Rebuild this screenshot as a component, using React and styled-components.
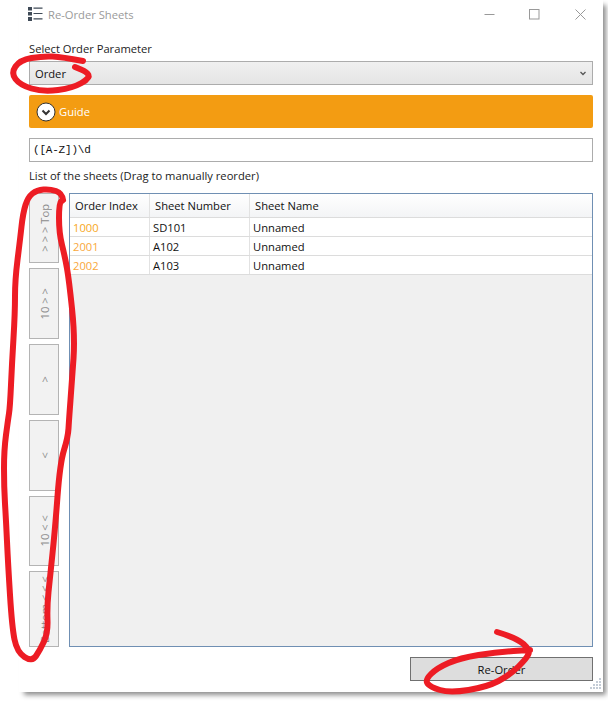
import React from 'react';
import styled, { createGlobalStyle } from 'styled-components';

const Global = createGlobalStyle`
  html, body { margin: 0; padding: 0; background: #fff; }
  body { font-family: "Open Sans", "Noto Sans", sans-serif; }
`;

const Page = styled.div`
  position: relative;
  width: 608px;
  height: 701px;
  overflow: hidden;
  background: #fff;
`;

const Window = styled.div`
  margin-left: 19px;
  width: 584px;
  height: 692px;
  box-sizing: border-box;
  background: #fff;
  box-shadow: 4px 4px 5px -1px rgba(0, 0, 0, 0.45);
  display: flex;
  flex-direction: column;
  position: relative;
`;

const TitleBar = styled.div`
  height: 28px;
  display: flex;
  align-items: center;
  padding-left: 9px;
  flex-shrink: 0;
`;

const Title = styled.span`
  margin-left: 5px;
  font-size: 11.2px;
  color: #9a9a9a;
  flex: 1;
`;

const WinControls = styled.div`
  display: flex;
  align-items: center;
  width: 136.5px;
  flex-shrink: 0;
`;

const WinButton = styled.span`
  width: 45.5px;
  display: flex;
  justify-content: center;
`;

const Body = styled.div`
  flex: 1;
  display: flex;
  flex-direction: column;
  padding: 13px 10px 11px 10px;
  min-height: 0;
`;

const Label = styled.div`
  font-size: 11.2px;
  line-height: 16px;
  color: #1c1c1c;
  height: ${p => p.$h}px;
`;

const Combo = styled.div`
  height: 24px;
  box-sizing: border-box;
  border: 1px solid #acacac;
  background: linear-gradient(#f0f0f0, #e5e5e5);
  display: flex;
  align-items: center;
  justify-content: space-between;
  padding: 0 6px 0 5px;
  font-size: 11.2px;
  color: #111;
`;

const Guide = styled.div`
  height: 33px;
  margin-top: 10px;
  border-radius: 2px;
  background: #f39c12;
  display: flex;
  align-items: center;
  gap: 3px;
  padding-left: 7px;
  color: #fff;
  font-size: 11.2px;
`;

const RegexInput = styled.div`
  height: 24px;
  margin-top: 10px;
  box-sizing: border-box;
  border: 1px solid #acacac;
  background: #fff;
  display: flex;
  align-items: center;
  padding-left: 3px;
  font-family: "Liberation Mono", monospace;
  font-size: 11px;
  letter-spacing: -0.2px;
  color: #111;
`;

const ListLabel = styled(Label)`
  margin-top: 6px;
`;

const ListArea = styled.div`
  flex: 1;
  display: flex;
  gap: 10px;
  min-height: 0;
`;

const SideButtons = styled.div`
  width: 30px;
  display: flex;
  flex-direction: column;
  gap: 5px;
`;

const SideButton = styled.div`
  height: ${p => p.$h}px;
  box-sizing: border-box;
  border: 1px solid #b4b4b4;
  background: #f2f2f2;
  color: #8c8c8c;
  font-size: 11.2px;
  display: flex;
  align-items: center;
  justify-content: center;
  overflow: hidden;
  white-space: nowrap;
`;

const Rotated = styled.span`
  writing-mode: vertical-rl;
  transform: rotate(180deg);
`;

const Grid = styled.div`
  flex: 1;
  box-sizing: border-box;
  border: 1px solid #6f8fb3;
  background: #f0f0f0;
`;

const Row = styled.div`
  display: grid;
  grid-template-columns: 80px 100px 1fr;
  height: ${p => (p.$head ? 24 : 19)}px;
  box-sizing: border-box;
  background: ${p => (p.$head ? 'linear-gradient(#fff, #f3f4f6)' : '#fff')};
  border-bottom: 1px solid #dcdcdc;
`;

const Cell = styled.div`
  display: flex;
  align-items: center;
  padding-left: ${p => (p.$head ? 5 : 3)}px;
  font-size: 11.2px;
  color: ${p => p.$color || '#111'};
  border-right: 1px solid ${p => (p.$last ? 'transparent' : '#e2e2e2')};
  box-sizing: border-box;
  white-space: nowrap;
`;

const Footer = styled.div`
  display: flex;
  justify-content: flex-end;
  margin-top: 10px;
`;

const PrimaryButton = styled.div`
  width: 183px;
  height: 24px;
  box-sizing: border-box;
  border: 1px solid #707070;
  background: #dddddd;
  color: #111;
  font-size: 11.2px;
  display: flex;
  align-items: center;
  justify-content: center;
`;

const Grip = styled.svg`
  position: absolute;
  right: 2px;
  bottom: 3px;
`;

const Scribbles = styled.svg`
  position: absolute;
  left: 0;
  top: 0;
  pointer-events: none;
`;

const rows = [
  ['1000', 'SD101', '#f7a823'],
  ['2001', 'A102', '#f9a83c'],
  ['2002', 'A103', '#f9a83c'],
];

const sideButtons = [
  ['> > > Top', 70],
  ['10 > >', 71],
  ['>', 71],
  ['<', 71],
  ['10 < <', 70],
  ['Bottom < < <', 76],
];

const smooth = pts => {
  let d = `M${pts[0][0]} ${pts[0][1]}`;
  for (let i = 1; i < pts.length - 1; i++) {
    const mx = (pts[i][0] + pts[i + 1][0]) / 2;
    const my = (pts[i][1] + pts[i + 1][1]) / 2;
    d += `Q${pts[i][0]} ${pts[i][1]} ${mx} ${my}`;
  }
  const last = pts[pts.length - 1];
  return `${d}L${last[0]} ${last[1]}`;
};

const orderMark = [[83, 61], [62, 57], [43, 56], [20, 60], [11, 73], [20, 85], [43, 92], [73, 88], [90, 78], [87, 72], [75, 67]];
const listMark = [[63, 200], [62, 193], [50, 189], [37, 190], [28, 197], [23, 213], [20, 240], [15, 280], [15, 313], [12, 363], [10, 407], [8, 420], [4, 450], [4, 487], [6, 520], [8, 563], [12, 627], [17, 652], [32, 662], [40, 650], [48, 633], [47, 607], [50, 577], [55, 530], [60, 463], [68, 437], [69, 420], [72, 380], [75, 337], [69, 280], [65, 257], [59, 233], [59, 203], [63, 200]];
const buttonMark = [[497, 632], [517, 638], [530, 650], [527, 658], [510, 675], [487, 687], [450, 693], [430, 687], [425, 680], [437, 668], [460, 658], [497, 652], [530, 650]];

export default function App() {
  return (
    <Page>
      <Global />
      <Window>
        <TitleBar>
          <svg width="15" height="14" viewBox="0 0 15 14">
            <rect x="0" y="0" width="4" height="3.5" fill="#3f4a57" />
            <rect x="0" y="5" width="4" height="3.5" fill="#3f4a57" />
            <rect x="0" y="10" width="4" height="4" fill="#3f4a57" />
            <path d="M5.5 1.2H14.500M5.500 6.500H14.500M5.500 11.800H14.500" stroke="#3f4a57" strokeWidth="1.2" fill="none" />
          </svg>
          <Title>Re-Order Sheets</Title>
          <WinControls>
            <WinButton>
              <svg width="11" height="11" viewBox="0 0 11 11"><path d="M0.5 5.500H10.500" stroke="#999" fill="none" /></svg>
            </WinButton>
            <WinButton>
              <svg width="11" height="11" viewBox="0 0 11 11"><rect x="0.5" y="0.500" width="9.500" height="9.500" stroke="#999" fill="none" /></svg>
            </WinButton>
            <WinButton>
              <svg width="11" height="11" viewBox="0 0 11 11"><path d="M0.5 0.500L10.500 10.500M10.500 0.500L0.500 10.500" stroke="#999" fill="none" /></svg>
            </WinButton>
          </WinControls>
        </TitleBar>
        <Body>
          <Label $h={20}>Select Order Parameter</Label>
          <Combo>
            <span>Order</span>
            <svg width="6" height="5" viewBox="0 0 6 5"><path d="M0.500 1L3 3.500L5.500 1" stroke="#555" strokeWidth="1.300" fill="none" /></svg>
          </Combo>
          <Guide>
            <svg width="20" height="20" viewBox="0 0 20 20">
              <circle cx="10" cy="10" r="9" fill="#fff" stroke="#333" strokeWidth="1" />
              <path d="M6.500 8.500L10 12L13.500 8.500" stroke="#333" strokeWidth="2" fill="none" />
            </svg>
            <span>Guide</span>
          </Guide>
          <RegexInput>([A-Z])\d</RegexInput>
          <ListLabel $h={25}>List of the sheets (Drag to manually reorder)</ListLabel>
          <ListArea>
            <SideButtons>
              {sideButtons.map(([text, h]) => (
                <SideButton key={text} $h={h}>
                  <Rotated>{text}</Rotated>
                </SideButton>
              ))}
            </SideButtons>
            <Grid>
              <Row $head>
                <Cell $head>Order Index</Cell>
                <Cell $head>Sheet Number</Cell>
                <Cell $head $last>Sheet Name</Cell>
              </Row>
              {rows.map(([idx, num, color]) => (
                <Row key={idx}>
                  <Cell $color={color}>{idx}</Cell>
                  <Cell>{num}</Cell>
                  <Cell $last>Unnamed</Cell>
                </Row>
              ))}
            </Grid>
          </ListArea>
          <Footer>
            <PrimaryButton>Re-Order</PrimaryButton>
          </Footer>
        </Body>
        <Grip width="11" height="11" viewBox="0 0 11 11" fill="#c4ccd6">
          <rect x="9" y="0" width="2" height="2" />
          <rect x="9" y="3" width="2" height="2" /><rect x="6" y="3" width="2" height="2" />
          <rect x="9" y="6" width="2" height="2" /><rect x="6" y="6" width="2" height="2" /><rect x="3" y="6" width="2" height="2" />
          <rect x="9" y="9" width="2" height="2" /><rect x="6" y="9" width="2" height="2" /><rect x="3" y="9" width="2" height="2" /><rect x="0" y="9" width="2" height="2" />
        </Grip>
      </Window>
      <Scribbles width="608" height="701" viewBox="0 0 608 701" fill="none" stroke="#ed1c24" strokeWidth="6" strokeLinecap="round" strokeLinejoin="round">
        <path d={smooth(orderMark)} />
        <path d={smooth(listMark)} />
        <path d={smooth(buttonMark)} />
      </Scribbles>
    </Page>
  );
}
